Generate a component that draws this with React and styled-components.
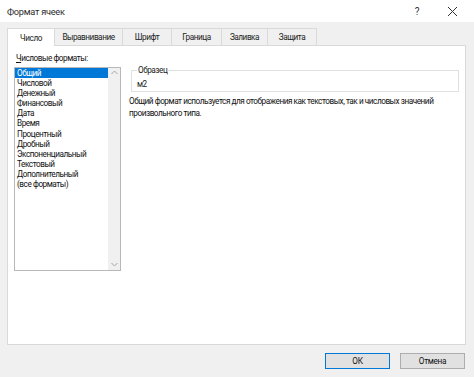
import React, { useState } from 'react';
import styled, { createGlobalStyle } from 'styled-components';

const GlobalStyle = createGlobalStyle`
  html, body {
    margin: 0;
    padding: 0;
    background: #f0f0f0;
  }
  * {
    box-sizing: border-box;
  }
`;

const Dialog = styled.div`
  width: 474px;
  height: 377px;
  display: flex;
  flex-direction: column;
  font-family: Roboto, 'Liberation Sans', sans-serif;
  font-size: 8.2px;
  letter-spacing: -0.45px;
  color: #111;
  background: #f0f0f0;
  overflow: hidden;
`;

const TitleBar = styled.div`
  height: 22px;
  flex: none;
  background: #fff;
  display: flex;
  align-items: center;
  padding: 0 12px 0 7px;
`;

const Title = styled.div`
  flex: 1;
  font-size: 9.2px;
  letter-spacing: -0.25px;
  color: #2b2b2b;
`;

const TitleButton = styled.div`
  width: 20px;
  display: flex;
  justify-content: center;
  align-items: center;
  margin-left: ${(p) => p.gap || 0}px;
  font-size: 10px;
  color: #333;
`;

const Body = styled.div`
  flex: 1;
  display: flex;
  flex-direction: column;
  padding: 6px 8px 0 7px;
`;

const Tabs = styled.div`
  display: flex;
  height: 17px;
  flex: none;
`;

const Tab = styled.div`
  width: ${(p) => p.w}px;
  display: flex;
  align-items: center;
  justify-content: center;
  border: 1px solid #d9d9d9;
  border-left: ${(p) => (p.first ? '1px solid #d9d9d9' : 'none')};
  border-bottom: none;
  background: ${(p) => (p.active ? '#fff' : '#f0f0f0')};
  color: #222;
  margin-bottom: ${(p) => (p.active ? '-1px' : '0')};
  position: relative;
  z-index: ${(p) => (p.active ? 1 : 0)};
`;

const Panel = styled.div`
  height: 300px;
  flex: none;
  background: #fff;
  border: 1px solid #d9d9d9;
  display: flex;
  gap: 8px;
  padding: 6px 6px 0 7px;
`;

const LeftCol = styled.div`
  display: flex;
  flex-direction: column;
  width: 107px;
`;

const Label = styled.div`
  line-height: 12px;
  margin-bottom: 3px;
  padding-left: 1px;
`;

const Key = styled.span`
  text-decoration: underline;
`;

const ListBox = styled.div`
  width: 107px;
  height: 204px;
  border: 1px solid #b8b8b8;
  display: flex;
  margin-left: -1px;
`;

const Items = styled.div`
  flex: 1;
  display: flex;
  flex-direction: column;
`;

const Item = styled.div`
  height: 10.1px;
  line-height: 10px;
  padding-left: 2px;
  white-space: nowrap;
  background: ${(p) => (p.selected ? '#0078d7' : 'transparent')};
  color: ${(p) => (p.selected ? '#fff' : '#111')};
  cursor: default;
`;

const ScrollBar = styled.div`
  width: 12px;
  background: #f0f0f0;
  display: flex;
  flex-direction: column;
  justify-content: space-between;
  align-items: center;
  padding: 2px 0 3px;
`;

const RightCol = styled.div`
  flex: 1;
  display: flex;
  flex-direction: column;
  padding-top: 12px;
`;

const Sample = styled.fieldset`
  margin: 0 0 0 2px;
  padding: 2px 6px 1px 5px;
  border: 1px solid #e0e0e0;
  width: 328px;
  min-width: 0;
`;

const Legend = styled.legend`
  padding: 0 1px;
  line-height: 12px;
  color: #222;
`;

const SampleValue = styled.div`
  line-height: 12px;
  color: #222;
`;

const Description = styled.div`
  margin-top: 3px;
  line-height: 12px;
  width: 330px;
`;

const Footer = styled.div`
  flex: 1;
  display: flex;
  justify-content: flex-end;
  align-items: flex-start;
  gap: 10px;
  padding: 8px 1px 0 0;
`;

const Button = styled.button`
  width: 65px;
  height: 16px;
  padding: 0;
  font-family: inherit;
  font-size: 8.2px;
  letter-spacing: -0.3px;
  color: #111;
  background: #e1e1e1;
  border: 1px solid ${(p) => (p.primary ? '#0078d7' : '#adadad')};
`;

const formats = [
  'Общий',
  'Числовой',
  'Денежный',
  'Финансовый',
  'Дата',
  'Время',
  'Процентный',
  'Дробный',
  'Экспоненциальный',
  'Текстовый',
  'Дополнительный',
  '(все форматы)',
];

const tabs = [
  { name: 'Число', w: 48 },
  { name: 'Выравнивание', w: 68 },
  { name: 'Шрифт', w: 49 },
  { name: 'Граница', w: 50 },
  { name: 'Заливка', w: 46 },
  { name: 'Защита', w: 49 },
];

const Chevron = ({ down }) => (
  <svg width="7" height="5" viewBox="0 0 7 5">
    <path
      d={down ? 'M0.5 1 L3.5 4 L6.5 1' : 'M0.5 4 L3.5 1 L6.5 4'}
      fill="none"
      stroke="#a6a6a6"
      strokeWidth="1"
    />
  </svg>
);

const App = () => {
  const [selected, setSelected] = useState(0);

  return (
    <Dialog>
      <GlobalStyle />
      <TitleBar>
        <Title>Формат ячеек</Title>
        <TitleButton>?</TitleButton>
        <TitleButton gap={15}>
          <svg width="11" height="11" viewBox="0 0 11 11">
            <path d="M1 1 L10 10 M10 1 L1 10" stroke="#333" strokeWidth="1" />
          </svg>
        </TitleButton>
      </TitleBar>
      <Body>
        <Tabs>
          {tabs.map((t, idx) => (
            <Tab key={t.name} w={t.w} first={idx === 0} active={idx === 0}>
              {t.name}
            </Tab>
          ))}
        </Tabs>
        <Panel>
          <LeftCol>
            <Label>
              <Key>Ч</Key>исловые форматы:
            </Label>
            <ListBox>
              <Items>
                {formats.map((f, idx) => (
                  <Item
                    key={f}
                    selected={idx === selected}
                    onClick={() => setSelected(idx)}
                  >
                    {f}
                  </Item>
                ))}
              </Items>
              <ScrollBar>
                <Chevron />
                <Chevron down />
              </ScrollBar>
            </ListBox>
          </LeftCol>
          <RightCol>
            <Sample>
              <Legend>Образец</Legend>
              <SampleValue>м2</SampleValue>
            </Sample>
            <Description>
              Общий формат используется для отображения как текстовых, так и
              числовых значений произвольного типа.
            </Description>
          </RightCol>
        </Panel>
        <Footer>
          <Button primary>ОК</Button>
          <Button>Отмена</Button>
        </Footer>
      </Body>
    </Dialog>
  );
};

export default App;
